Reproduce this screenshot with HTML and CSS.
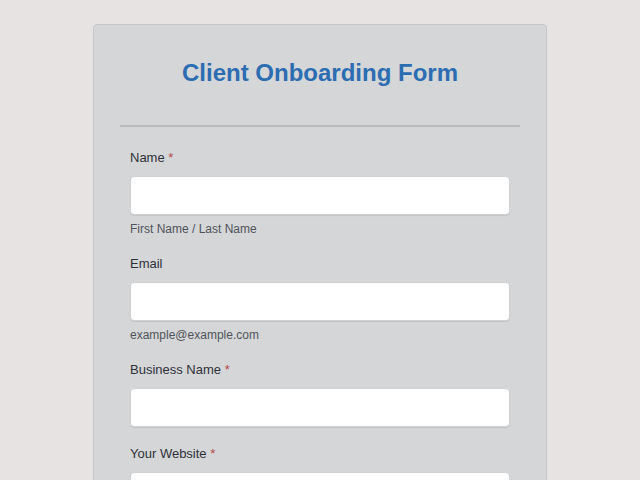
FILE: index.html
```html
<!DOCTYPE html>
<html>
<head>
<meta charset="utf-8">
<link rel="stylesheet" href="styles.css">
</head>
<body>
<div class="card">
  <div class="header">
    <h1 class="title">Client Onboarding Form</h1>
  </div>
  <div class="fields">
    <div class="field">
      <label class="label">Name <span class="req">*</span></label>
      <input class="input" type="text">
      <div class="hint">First Name / Last Name</div>
    </div>
    <div class="field">
      <label class="label">Email</label>
      <input class="input" type="text">
      <div class="hint">example@example.com</div>
    </div>
    <div class="field">
      <label class="label">Business Name <span class="req">*</span></label>
      <input class="input" type="text">
    </div>
    <div class="field">
      <label class="label">Your Website <span class="req">*</span></label>
      <input class="input" type="text">
    </div>
  </div>
</div>
</body>
</html>
```
FILE: styles.css
```css
html, body {
  margin: 0;
  padding: 0;
  background: #e7e3e2;
  font-family: "Liberation Sans", Arial, sans-serif;
  height: 480px;
  overflow: hidden;
}
.card {
  width: 400px;
  margin: 24px auto 0;
  padding: 0 26px 40px;
  background: #d5d6d8;
  border: 1px solid #c6c6c8;
  border-radius: 4px;
}
.header {
  padding: 34px 0 38px;
  border-bottom: 2px solid #b8b9bb;
}
.title {
  margin: 0;
  text-align: center;
  font-size: 24px;
  line-height: 28px;
  font-weight: bold;
  color: #2c6db2;
}
.fields {
  padding: 23px 10px 0;
}
.field {
  display: flex;
  flex-direction: column;
  margin-bottom: 19px;
}
.label {
  font-size: 13px;
  line-height: 16px;
  color: #2e3238;
}
.req {
  color: #b5484a;
}
.input {
  box-sizing: border-box;
  margin: 10px 0 0;
  height: 39px;
  width: 100%;
  background: #fff;
  border: 1px solid #cfd0d2;
  border-radius: 4px;
  box-shadow: 0 1px 1px rgba(0,0,0,0.08);
}
.hint {
  margin-top: 6px;
  font-size: 12px;
  line-height: 16px;
  color: #50545a;
}
```
